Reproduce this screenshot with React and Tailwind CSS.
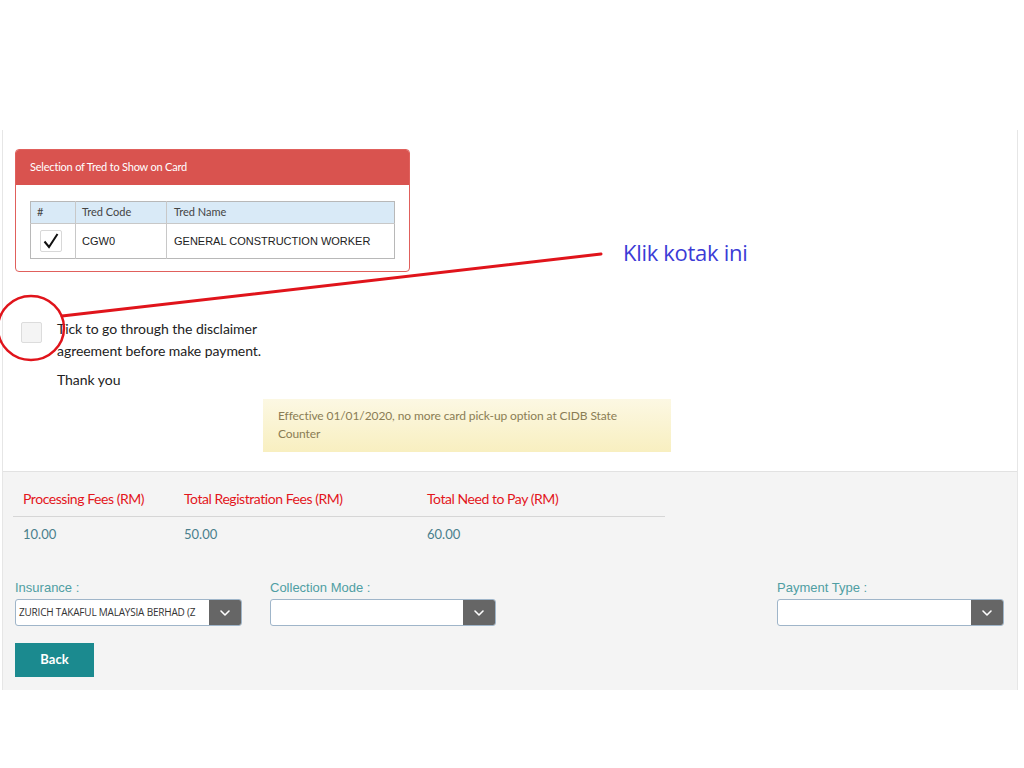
import { ChevronDown } from 'lucide-react';

const SelectBox = ({ label, value, width }) => (
  <div className={width}>
    <div className="text-[13px] leading-[16px] text-[#4f9ea3] font-['Liberation_Sans',Arial,sans-serif] mb-[3px]">
      {label}
    </div>
    <div className="flex h-[27px] bg-white border border-[#9fb5c9] rounded-[3px] overflow-hidden">
      <div className="flex-1 flex items-center pl-[3px] text-[10px] text-[#333] tracking-[-0.2px] whitespace-nowrap overflow-hidden font-['Open_Sans',sans-serif]">
        {value}
      </div>
      <div className="w-[32px] bg-[#666666] flex items-center justify-center">
        <ChevronDown size={16} strokeWidth={2.4} className="text-white" />
      </div>
    </div>
  </div>
);

export default function App() {
  return (
    <div className="w-[1024px] h-[768px] bg-white relative font-['Lato',sans-serif]">
      <div className="h-[130px]" />
      <div className="ml-[2px] w-[1016px] border-x border-[#e6e6e6]">
        {/* white part */}
        <div className="h-[341px] pt-[19px] pl-[12px]">
          <div className="w-[395px] h-[123px] border border-[#e0605c] rounded-[4px] overflow-hidden">
            <div className="h-[35px] bg-[#d9534f] flex items-center pl-[14px] text-white text-[11px] tracking-[-0.2px]">
              Selection of Tred to Show on Card
            </div>
            <div className="pt-[16px] pl-[14px]">
              <table className="w-[365px] border-collapse border border-[#b8b8b8] text-[11px]">
                <thead>
                  <tr className="h-[22px] bg-[#d9eaf7] text-[#444]">
                    <th className="w-[45px] border-r border-[#c8c8c8] text-left font-normal pl-[6px]">#</th>
                    <th className="w-[91px] border-r border-[#c8c8c8] text-left font-normal pl-[6px]">Tred Code</th>
                    <th className="text-left font-normal pl-[7px]">Tred Name</th>
                  </tr>
                </thead>
                <tbody>
                  <tr className="h-[35px] border-t border-[#c8c8c8] text-[#222] font-['Liberation_Sans',Arial,sans-serif]">
                    <td className="border-r border-[#c8c8c8] pl-[9px]">
                      <div className="w-[22px] h-[22px] border border-[#d8d8d8] rounded-[2px] flex items-center justify-center">
                        <svg width="18" height="18" viewBox="0 0 18 18">
                          <path d="M2.5 9.5 L7 15 L15.5 2" fill="none" stroke="#111" strokeWidth="2" />
                        </svg>
                      </div>
                    </td>
                    <td className="border-r border-[#c8c8c8] pl-[6px]">CGW0</td>
                    <td className="pl-[7px]">GENERAL CONSTRUCTION WORKER</td>
                  </tr>
                </tbody>
              </table>
            </div>
          </div>

          <div className="flex mt-[46px] ml-[6px]">
            <div className="w-[21px] h-[21px] mt-[4px] border border-[#dcdcdc] bg-[#f4f4f4] rounded-[2px]" />
            <div className="ml-[15px] text-[14px] text-[#222] tracking-[-0.05px]">
              <div className="leading-[22px]">Tick to go through the disclaimer</div>
              <div className="leading-[22px]">agreement before make payment.</div>
              <div className="leading-[22px] mt-[7px]">Thank you</div>
            </div>
          </div>

          <div className="ml-[248px] mt-[8px] w-[408px] h-[53px] bg-gradient-to-b from-[#fcf8e3] to-[#f8efc0] pl-[15px] pt-[8px] text-[12px] leading-[18px] text-[#8a7d55] tracking-[-0.1px]">
            Effective 01/01/2020, no more card pick-up option at CIDB State
            <br />
            Counter
          </div>
        </div>

        {/* gray part */}
        <div className="h-[219px] bg-[#f4f4f4] border-t border-[#e2e2e2] pt-[18px]">
          <div className="ml-[10px] w-[652px] border-b border-[#d6d6d6] flex text-[14px] leading-[18px] text-[#e3161c] tracking-[-0.45px] h-[27px]">
            <div className="w-[171px] pl-[10px]">Processing Fees (RM)</div>
            <div className="w-[243px]">Total Registration Fees (RM)</div>
            <div>Total Need to Pay (RM)</div>
          </div>
          <div className="ml-[10px] flex text-[13px] text-[#4a7f8c] h-[35px] items-center">
            <div className="w-[171px] pl-[10px]">10.00</div>
            <div className="w-[243px]">50.00</div>
            <div>60.00</div>
          </div>

          <div className="flex justify-between pl-[12px] pr-[13px] mt-[28px]">
            <div className="flex gap-[28px]">
              <SelectBox label="Insurance :" value="ZURICH TAKAFUL MALAYSIA BERHAD (Z" width="w-[227px]" />
              <SelectBox label="Collection Mode :" value="" width="w-[226px]" />
            </div>
            <SelectBox label="Payment Type :" value="" width="w-[227px]" />
          </div>

          <button className="block ml-[12px] mt-[17px] w-[79px] h-[34px] bg-[#1b8a8f] text-white text-[13px] font-bold">
            Back
          </button>
        </div>
      </div>

      {/* annotation overlay */}
      <svg className="absolute left-0 top-0 pointer-events-none" width="1024" height="768">
        <line x1="62" y1="316" x2="601" y2="254" stroke="#e0141b" strokeWidth="3" strokeLinecap="round" />
        <ellipse cx="31" cy="328" rx="33" ry="32" fill="none" stroke="#e0141b" strokeWidth="2.5" />
      </svg>
      <div className="absolute left-[623px] top-[236px] text-[22px] text-[#3b3bd6] font-['Open_Sans',sans-serif] tracking-[-0.3px]">
        Klik kotak ini
      </div>
    </div>
  );
}
